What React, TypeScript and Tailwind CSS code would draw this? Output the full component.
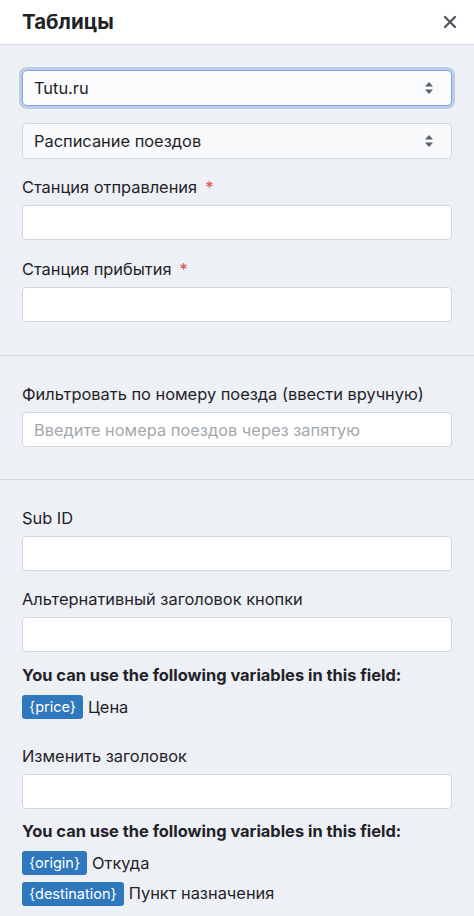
import React from "react";

const FONT = { fontFamily: "Inter, 'Noto Sans', sans-serif" };

function UpDown() {
  return (
    <svg width="10" height="14" viewBox="0 0 10 14" className="text-[#5b626b]">
      <path d="M5 1 L9 5.5 H1 Z" fill="currentColor" />
      <path d="M5 13 L9 8.5 H1 Z" fill="currentColor" />
    </svg>
  );
}

function Select({ value, focused }: { value: string; focused?: boolean }) {
  return (
    <div
      className={
        focused
          ? "flex h-[36px] items-center justify-between rounded-[5px] border border-[#86a6d6] bg-[#fafbfc] pl-[11px] pr-[17px] shadow-[0_0_0_3px_#b9cce8]"
          : "flex h-[36px] items-center justify-between rounded-[4px] border border-[#d3d7dc] bg-[#f9fafb] pl-[11px] pr-[17px]"
      }
    >
      <span className="text-[16.4px] text-[#1f2328]">{value}</span>
      <UpDown />
    </div>
  );
}

function Field({ label, required, placeholder }: { label: string; required?: boolean; placeholder?: string }) {
  return (
    <div className="flex flex-col gap-[6px]">
      <label className="text-[16.4px] leading-[24px] text-[#1f2328]">
        {label}
        {required && <span className="ml-[8px] text-[#d9534f]">*</span>}
      </label>
      <input
        className="h-[35px] w-full rounded-[4px] border border-[#d3d7dc] bg-white px-[11px] text-[16.4px] text-[#1f2328] placeholder:text-[#a3a8ae] outline-none"
        placeholder={placeholder}
        style={FONT}
      />
    </div>
  );
}

function Badge({ children }: { children: React.ReactNode }) {
  return (
    <span className="inline-flex h-[24px] items-center rounded-[3px] bg-[#2f78bd] px-[7px] text-[14.5px] text-white">
      {children}
    </span>
  );
}

function VarRow({ name, desc }: { name: string; desc: string }) {
  return (
    <div className="flex items-center gap-[5px]">
      <Badge>{name}</Badge>
      <span className="text-[16.4px] text-[#1f2328]">{desc}</span>
    </div>
  );
}

export default function App() {
  return (
    <div className="h-[916px] w-[474px] overflow-hidden bg-[#edf0f4]" style={FONT}>
      {/* header */}
      <div className="flex h-[45px] items-center justify-between border-b border-[#d7dbe0] bg-white pl-[22px] pr-[13px]">
        <h1 className="text-[20.5px] font-bold text-[#1f2328]">Таблицы</h1>
        <svg width="22" height="22" viewBox="0 0 22 22" className="text-[#4b525a]">
          <path d="M6 6 L16 16 M16 6 L6 16" stroke="currentColor" strokeWidth="2.2" strokeLinecap="round" />
        </svg>
      </div>

      {/* main settings */}
      <div className="flex flex-col px-[22px] pb-[33px] pt-[25px]">
        <Select value="Tutu.ru" focused />
        <div className="mt-[17px]">
          <Select value="Расписание поездов" />
        </div>
        <div className="mt-[16px] flex flex-col gap-[17px]">
          <Field label="Станция отправления" required />
          <Field label="Станция прибытия" required />
        </div>
      </div>

      <div className="border-t border-[#d7dbe0] px-[22px] pb-[32px] pt-[26px]">
        <Field label="Фильтровать по номеру поезда (ввести вручную)" placeholder="Введите номера поездов через запятую" />
      </div>

      <div className="border-t border-[#d7dbe0] px-[22px] pt-[26px]">
        <div className="flex flex-col gap-[16px]">
          <Field label="Sub ID" />
          <Field label="Альтернативный заголовок кнопки" />
        </div>
        <p className="mt-[11px] text-[16.4px] font-bold leading-[24px] text-[#1f2328]">
          You can use the following variables in this field:
        </p>
        <div className="mt-[8px]">
          <VarRow name="{price}" desc="Цена" />
        </div>

        <div className="mt-[24px]">
          <Field label="Изменить заголовок" />
        </div>
        <p className="mt-[10px] text-[16.4px] font-bold leading-[24px] text-[#1f2328]">
          You can use the following variables in this field:
        </p>
        <div className="mt-[8px] flex flex-col gap-[6px]">
          <VarRow name="{origin}" desc="Откуда" />
          <VarRow name="{destination}" desc="Пункт назначения" />
        </div>
      </div>
    </div>
  );
}
